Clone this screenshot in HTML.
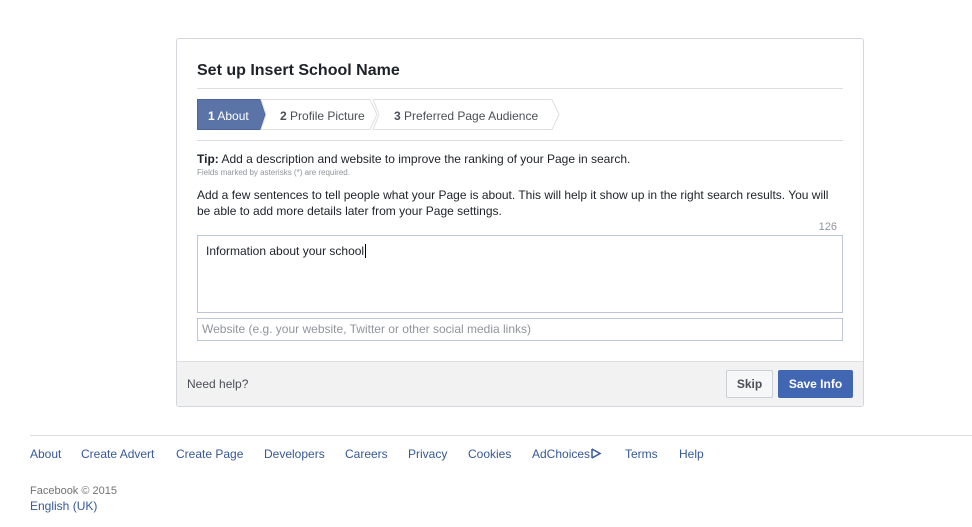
<!DOCTYPE html>
<html><head><meta charset="utf-8"><style>
body{margin:0;background:#fff;font-family:"Liberation Sans",Arial,sans-serif;width:972px;height:527px;position:relative;overflow:hidden}
.a{position:absolute;white-space:nowrap}
.card{position:absolute;left:176px;top:38px;width:686px;height:367px;border:1px solid #d3d6db;border-radius:3px;background:#fff;overflow:hidden}
.foot{position:absolute;left:0;top:322px;width:686px;height:45px;background:#f2f2f2;border-top:1px solid #dddfe2}
.hr{position:absolute;height:1px;background:#dddfe2}
.fl{color:#365899;font-size:12px;top:447px}
</style></head><body>
<div class="card">
 <div class="a" style="left:20px;top:23px;font-size:16px;font-weight:bold;color:#1d2129">Set up Insert School Name</div>
 <div class="hr" style="left:20px;top:49px;width:646px"></div>
 <svg class="a" style="left:20px;top:60px" width="370" height="32">
  <polygon points="0.5,0.5 63,0.5 68,15.5 63,30.5 0.5,30.5" fill="#5b74a8" stroke="#4b64a0"/>
  <polygon points="64,0.5 173,0.5 180,15.5 173,30.5 64,30.5 69,15.5" fill="#fff" stroke="#dddfe2"/>
  <polygon points="176,0.5 355,0.5 362,15.5 355,30.5 176,30.5 182,15.5" fill="#fff" stroke="#dddfe2"/>
  <text x="11" y="21" font-size="12" fill="#fff" font-family="Liberation Sans,sans-serif"><tspan font-weight="bold">1</tspan> About</text>
  <text x="83" y="21" font-size="12" fill="#4b4f56" font-family="Liberation Sans,sans-serif"><tspan font-weight="bold">2</tspan> Profile Picture</text>
  <text x="197" y="21" font-size="12" fill="#4b4f56" font-family="Liberation Sans,sans-serif"><tspan font-weight="bold">3</tspan> Preferred Page Audience</text>
 </svg>
 <div class="hr" style="left:20px;top:101px;width:646px"></div>
 <div class="a" style="left:20px;top:113px;font-size:12px;color:#1d2129"><b>Tip:</b> Add a description and website to improve the ranking of your Page in search.</div>
 <div class="a" style="left:20px;top:129px;font-size:8px;color:#90949c">Fields marked by asterisks (*) are required.</div>
 <div class="a" style="left:20px;top:148px;font-size:12px;line-height:16px;color:#1d2129;white-space:normal;width:646px">Add a few sentences to tell people what your Page is about. This will help it show up in the right search results. You will be able to add more details later from your Page settings.</div>
 <div class="a" style="right:26px;top:182px;font-size:11px;color:#90949c">126</div>
 <div class="a" style="left:20px;top:196px;width:644px;height:76px;border:1px solid #bdc7d8"></div>
 <div class="a" style="left:29px;top:205px;font-size:12px;color:#1d2129">Information about your school<span style="border-left:1px solid #000;margin-left:1px"></span></div>
 <div class="a" style="left:20px;top:279px;width:644px;height:21px;border:1px solid #bdc7d8"></div>
 <div class="a" style="left:25px;top:283px;font-size:12px;color:#90949c">Website (e.g. your website, Twitter or other social media links)</div>
 <div class="foot">
  <div class="a" style="left:10px;top:15px;font-size:12px;color:#4b4f56">Need help?</div>
  <div class="a" style="left:549px;top:8px;width:45px;height:26px;border:1px solid #ccd0d5;background:#f6f7f9;border-radius:2px;font-size:12px;font-weight:bold;color:#4b4f56;text-align:center;line-height:26px">Skip</div>
  <div class="a" style="left:601px;top:8px;width:73px;height:26px;border:1px solid #4267b2;background:#4267b2;border-radius:2px;font-size:12px;font-weight:bold;color:#fff;text-align:center;line-height:26px">Save Info</div>
 </div>
</div>
<div class="hr" style="left:30px;top:435px;width:942px"></div>
<div class="a fl" style="left:30px">About</div>
<div class="a fl" style="left:81px">Create Advert</div>
<div class="a fl" style="left:176px">Create Page</div>
<div class="a fl" style="left:264px">Developers</div>
<div class="a fl" style="left:345px">Careers</div>
<div class="a fl" style="left:408px">Privacy</div>
<div class="a fl" style="left:468px">Cookies</div>
<div class="a fl" style="left:532px">AdChoices<svg width="12" height="11" style="vertical-align:-1px"><path d="M2 1v9M2 1l8 4.5L2 10" fill="none" stroke="#365899" stroke-width="1.5"/></svg></div>
<div class="a fl" style="left:625px">Terms</div>
<div class="a fl" style="left:679px">Help</div>
<div class="a" style="left:30px;top:485px;font-size:11px;color:#737373">Facebook © 2015</div>
<div class="a" style="left:30px;top:499px;font-size:12px;color:#365899">English (UK)</div>
</body></html>
